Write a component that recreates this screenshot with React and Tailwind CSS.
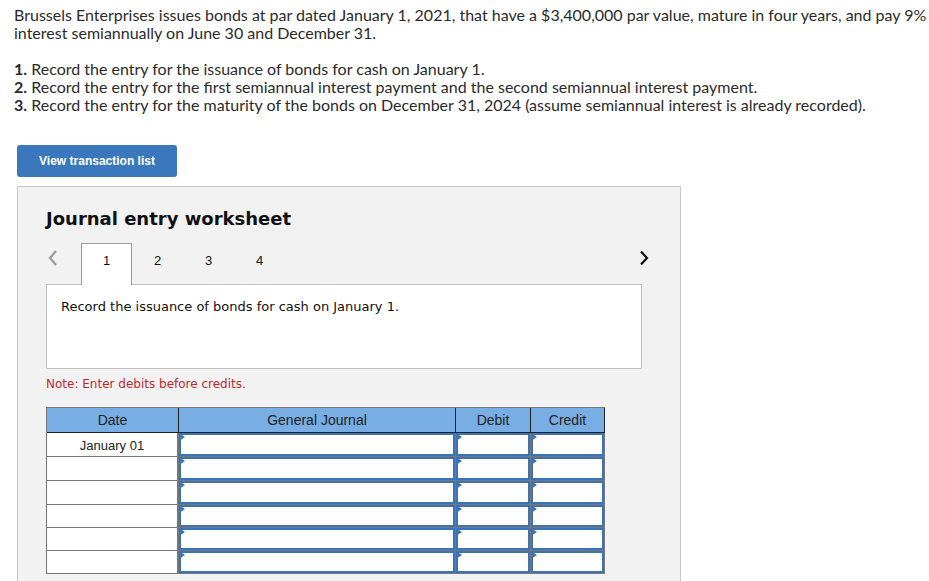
import React from "react";

const Tri = () => (
  <svg className="absolute left-0 top-0" width="6" height="8" viewBox="0 0 6 8">
    <path d="M0 0 L6 4 L0 8 Z" fill="#3b73b9" />
  </svg>
);

const InputCell = () => (
  <div className="relative border-r border-b border-[#777]">
    <div className="h-full border-2 border-[#3b73b9] bg-white"></div>
    <Tri />
  </div>
);

const rowHeights = ["h-[24px]", "h-[24px]", "h-[24px]", "h-[23px]", "h-[23px]", "h-[23px]"];

export default function App() {
  return (
    <div className="bg-white min-h-[581px] overflow-hidden text-[#222]">
      <div className="pl-[14px] pt-[6px] text-[16px] leading-[18px] text-[#2b2b2b] whitespace-nowrap font-['Lato',sans-serif]">
        <p>
          Brussels Enterprises issues bonds at par dated January 1, 2021, that have a $3,400,000 par value, mature in four years, and pay 9%
          <br />
          interest semiannually on June 30 and December 31.
        </p>
        <div className="mt-[18px]">
          <p><b>1.</b> Record the entry for the issuance of bonds for cash on January 1.</p>
          <p><b>2.</b> Record the entry for the first semiannual interest payment and the second semiannual interest payment.</p>
          <p><b>3.</b> Record the entry for the maturity of the bonds on December 31, 2024 (assume semiannual interest is already recorded).</p>
        </div>
      </div>

      <div className="pl-[17px] pt-[31px]">
        <button className="w-[160px] h-[32px] rounded-[3px] bg-[#3a77bc] text-white text-[12px] font-bold font-['Liberation_Sans',Arial,sans-serif]">
          View transaction list
        </button>

        <div className="mt-[9px] w-[664px] h-[420px] border border-[#c8c8c8] bg-[#f2f2f2] pl-[28px] pt-[20px]">
          <h2 className="text-[18px] leading-[24px] font-bold text-[#111] font-['DejaVu_Sans',Verdana,sans-serif]">
            Journal entry worksheet
          </h2>

          <div className="mt-[12px] w-[603px] flex items-end h-[41px]">
            <div className="w-[35px] h-full flex items-center pl-[2px] pb-[12px]">
              <svg width="10" height="16" viewBox="0 0 10 16">
                <path d="M8 1 L2 8 L8 15" stroke="#9a9a9a" strokeWidth="2.2" fill="none" />
              </svg>
            </div>
            <div className="flex h-full text-[13px] text-[#111] font-['Liberation_Sans',Arial,sans-serif]">
              <div className="relative z-10 w-[51px] h-[42px] border border-b-0 border-[#999] bg-white flex items-start justify-center pt-[7px]">1</div>
              <div className="w-[51px] flex items-start justify-center pt-[8px]">2</div>
              <div className="w-[51px] flex items-start justify-center pt-[8px]">3</div>
              <div className="w-[51px] flex items-start justify-center pt-[8px]">4</div>
            </div>
            <div className="flex-1"></div>
            <div className="h-full flex items-center pb-[12px]">
              <svg width="10" height="16" viewBox="0 0 10 16">
                <path d="M2 1.5 L8 8 L2 14.5" stroke="#111" strokeWidth="2.2" fill="none" />
              </svg>
            </div>
          </div>

          <div className="w-[596px] h-[85px] border border-[#c0c0c0] bg-white px-[14px] pt-[12px] text-[13px] text-[#111] font-['DejaVu_Sans',Verdana,sans-serif]">
            Record the issuance of bonds for cash on January 1.
          </div>

          <p className="mt-[7px] text-[12px] leading-[16px] text-[#c0282d] font-['DejaVu_Sans',sans-serif]">
            Note: Enter debits before credits.
          </p>

          <div className="mt-[15px] w-[559px] border-l border-t border-[#777] grid grid-cols-[132px_277px_75px_74px] text-[13px] font-['Liberation_Sans',Arial,sans-serif]">
            <div className="h-[25px] bg-[#78aee3] border-r border-b border-[#222] flex items-center justify-center text-[#222] text-[14px]">Date</div>
            <div className="h-[25px] bg-[#78aee3] border-r border-b border-[#222] flex items-center justify-center text-[#222] text-[14px]">General Journal</div>
            <div className="h-[25px] bg-[#78aee3] border-r border-b border-[#222] flex items-center justify-center text-[#222] text-[14px]">Debit</div>
            <div className="h-[25px] bg-[#78aee3] border-r border-b border-[#222] flex items-center justify-center text-[#222] text-[14px]">Credit</div>
            {rowHeights.map((h, i) => (
              <React.Fragment key={i}>
                <div className={`${h} bg-white border-r-2 border-b border-[#777] flex items-start pt-[3px] justify-center text-[#222]`}>
                  {i === 0 ? "January 01" : ""}
                </div>
                <InputCell />
                <InputCell />
                <InputCell />
              </React.Fragment>
            ))}
          </div>
        </div>
      </div>
    </div>
  );
}
